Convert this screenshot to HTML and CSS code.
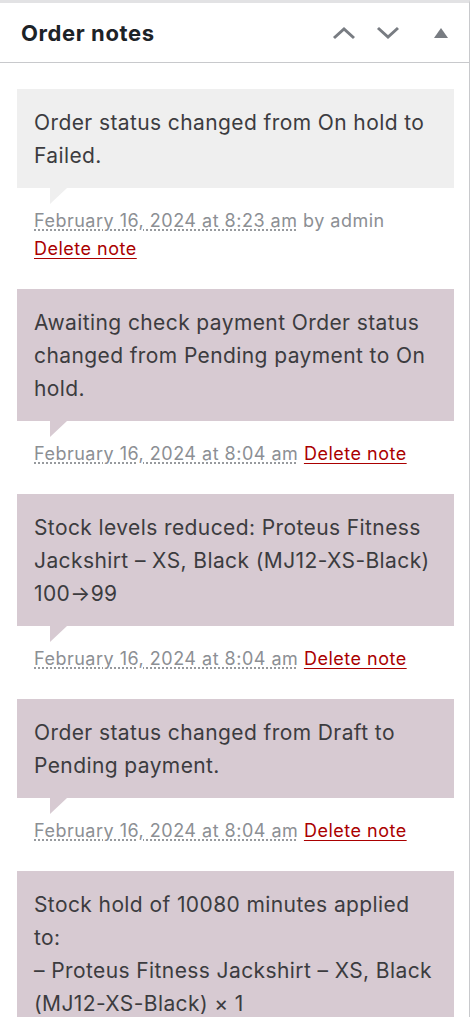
FILE: index.html
```html
<!DOCTYPE html>
<html>
<head>
<meta charset="utf-8">
<link rel="stylesheet" href="styles.css">
</head>
<body>
<div class="panel">
  <div class="panel-header">
    <h2 class="panel-title">Order notes</h2>
    <div class="panel-actions">
      <svg class="icon-chev" width="24" height="14" viewBox="0 0 24 14"><polyline points="2,12 12,3 22,12" fill="none" stroke="#787c82" stroke-width="3"/></svg>
      <svg class="icon-chev" width="24" height="14" viewBox="0 0 24 14"><polyline points="2,2 12,11 22,2" fill="none" stroke="#787c82" stroke-width="3"/></svg>
      <svg class="icon-tri" width="14" height="10" viewBox="0 0 14 10"><polygon points="0,10 7,0 14,10" fill="#787c82"/></svg>
    </div>
  </div>
  <ul class="notes">
    <li class="note system">
      <div class="note-content">Order status changed from On hold to Failed.</div>
      <p class="meta"><abbr class="exact-date">February 16, 2024 at 8:23 am</abbr> by admin <a class="delete-note" href="#">Delete note</a></p>
    </li>
    <li class="note">
      <div class="note-content">Awaiting check payment Order status changed from Pending payment to On hold.</div>
      <p class="meta"><abbr class="exact-date">February 16, 2024 at 8:04 am</abbr> <a class="delete-note" href="#">Delete note</a></p>
    </li>
    <li class="note">
      <div class="note-content">Stock levels reduced: Proteus Fitness Jackshirt – XS, Black (MJ12-XS-Black) 100→99</div>
      <p class="meta"><abbr class="exact-date">February 16, 2024 at 8:04 am</abbr> <a class="delete-note" href="#">Delete note</a></p>
    </li>
    <li class="note">
      <div class="note-content">Order status changed from Draft to Pending payment.</div>
      <p class="meta"><abbr class="exact-date">February 16, 2024 at 8:04 am</abbr> <a class="delete-note" href="#">Delete note</a></p>
    </li>
    <li class="note">
      <div class="note-content">Stock hold of 10080 minutes applied to:<br>– Proteus Fitness Jackshirt – XS, Black (MJ12-XS-Black) × 1</div>
      <p class="meta"><abbr class="exact-date">February 16, 2024 at 8:04 am</abbr> <a class="delete-note" href="#">Delete note</a></p>
    </li>
  </ul>
</div>
</body>
</html>
```
FILE: styles.css
```css
html, body {
  margin: 0;
  padding: 0;
  background: #fff;
  font-family: "Inter", "Liberation Sans", sans-serif;
}
.panel {
  width: 469px;
  border-top: 3px solid #e2e2e4;
  border-right: 1px solid #c8c9cc;
  background: #fff;
  min-height: 1014px;
}
.panel-header {
  height: 59px;
  border-bottom: 1px solid #c8c9cc;
  display: flex;
  align-items: center;
  justify-content: space-between;
  padding: 0 21px 0 21px;
}
.panel-title {
  margin: 0;
  font-size: 22px;
  font-weight: 700;
  color: #1d2327;
  letter-spacing: 0.6px;
}
.panel-actions {
  display: flex;
  align-items: center;
  gap: 20px;
}
.icon-tri {
  margin-left: 14px;
}
.notes {
  list-style: none;
  margin: 0;
  padding: 26px 15px 0 17px;
}
.note {
  margin: 0 0 26px;
}
.note-content {
  position: relative;
  background: #d7cad2;
  color: #3c3c3f;
  font-size: 21px;
  letter-spacing: 0.4px;
  line-height: 33px;
  padding: 17px 17px 16px 17px;
}
.note-content::after {
  content: "";
  position: absolute;
  left: 33px;
  bottom: -16px;
  border-style: solid;
  border-width: 16px 17px 0 0;
  border-color: #d7cad2 transparent transparent transparent;
}
.note.system .note-content {
  background: #efefef;
}
.note.system .note-content::after {
  border-color: #efefef transparent transparent transparent;
}
.meta {
  margin: 19px 0 0;
  padding: 0 17px;
  font-size: 18px;
  letter-spacing: 0.5px;
  line-height: 28px;
  color: #8c8f94;
}
.exact-date {
  text-decoration: underline dotted;
  text-underline-offset: 3px;
}
.delete-note {
  color: #a00;
  text-decoration: underline;
  text-underline-offset: 3px;
  white-space: nowrap;
}
```
